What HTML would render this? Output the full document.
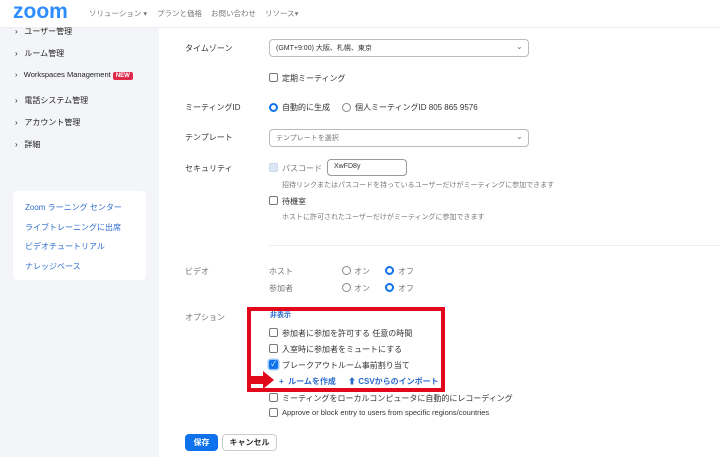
<!DOCTYPE html>
<html><head><meta charset="utf-8"><style>
*{margin:0;padding:0;box-sizing:border-box}
body{width:720px;height:457px;overflow:hidden;background:#fff;font-family:"Liberation Sans","Noto Sans CJK JP",sans-serif;color:#333;font-size:8px;position:relative}
.a{position:absolute;white-space:nowrap}
.side{position:absolute;left:0;top:28px;width:159px;height:429px;background:#f4f5f8}
.hdr{position:absolute;left:0;top:0;width:720px;height:28px;background:#fff;border-bottom:1px solid #eee}
.card{position:absolute;left:13px;top:191px;width:133px;height:89px;background:#fff;border-radius:4px}
.lnk{color:#2d6ccc;font-size:8px}
.cb{position:absolute;width:9px;height:9px;border:1px solid #777;border-radius:2px;background:#fff}
.rd{position:absolute;width:9px;height:9px;border:1px solid #888;border-radius:50%;background:#fff}
.rd.on{border:2.5px solid #0e72ed}
.sel{position:absolute;border:1px solid #bbb;border-radius:4px;background:#fff}
.g{color:#777}
.sb{color:#222}
</style></head><body>
<div class="hdr"></div>
<div class="a" style="left:13px;top:0px;font-size:21px;font-weight:bold;color:#2d8cff;line-height:24px">zoom</div>
<div class="a g" style="left:89px;top:8px;font-size:7.5px">ソリューション ▾</div>
<div class="a g" style="left:157px;top:8px;font-size:7.5px">プランと価格</div>
<div class="a g" style="left:211px;top:8px;font-size:7.5px">お問い合わせ</div>
<div class="a g" style="left:265px;top:8px;font-size:7.5px">リソース▾</div>
<div class="side"></div>
<div class="a sb" style="left:15px;top:26px;font-size:8px">›&nbsp;&nbsp; ユーザー管理</div>
<div class="a sb" style="left:15px;top:48px;font-size:8px">›&nbsp;&nbsp; ルーム管理</div>
<div class="a sb" style="left:15px;top:70px;font-size:7.5px">›&nbsp;&nbsp; Workspaces Management <span style="background:#e02a4a;color:#fff;font-weight:bold;font-size:6px;padding:1px 3px;border-radius:2px">NEW</span></div>
<div class="a sb" style="left:15px;top:95px;font-size:8px">›&nbsp;&nbsp; 電話システム管理</div>
<div class="a sb" style="left:15px;top:117px;font-size:8px">›&nbsp;&nbsp; アカウント管理</div>
<div class="a sb" style="left:15px;top:139px;font-size:8px">›&nbsp;&nbsp; 詳細</div>
<div class="card"></div>
<div class="a lnk" style="left:25px;top:202px">Zoom ラーニング センター</div>
<div class="a lnk" style="left:25px;top:222px">ライブトレーニングに出席</div>
<div class="a lnk" style="left:25px;top:241px">ビデオチュートリアル</div>
<div class="a lnk" style="left:25px;top:261px">ナレッジベース</div>

<div class="a" style="left:185px;top:43px">タイムゾーン</div>
<div class="sel" style="left:269px;top:39px;width:260px;height:18px"></div>
<div class="a" style="left:276px;top:43px;font-size:7px">(GMT+9:00) 大阪、札幌、東京</div>
<div class="a g" style="left:516px;top:42px">⌄</div>
<div class="cb" style="left:269px;top:73px"></div>
<div class="a" style="left:282px;top:73px">定期ミーティング</div>
<div class="a" style="left:185px;top:102px">ミーティングID</div>
<div class="rd on" style="left:269px;top:103px"></div>
<div class="a" style="left:282px;top:102px">自動的に生成</div>
<div class="rd" style="left:342px;top:103px"></div>
<div class="a" style="left:355px;top:102px">個人ミーティングID 805 865 9576</div>
<div class="a" style="left:185px;top:132px">テンプレート</div>
<div class="sel" style="left:269px;top:129px;width:260px;height:18px"></div>
<div class="a g" style="left:276px;top:133px;font-size:7px">テンプレートを選択</div>
<div class="a g" style="left:516px;top:132px">⌄</div>
<div class="a" style="left:185px;top:163px">セキュリティ</div>
<div class="cb" style="left:269px;top:163px;border-color:#c8d6ea;background:#dde6f3"></div>
<div class="a g" style="left:282px;top:163px">パスコード</div>
<div class="sel" style="left:327px;top:159px;width:80px;height:17px;border-color:#999"></div>
<div class="a" style="left:334px;top:163px;font-size:7px">XwFD8y</div>
<div class="a g" style="left:282px;top:180px;font-size:7px">招待リンクまたはパスコードを持っているユーザーだけがミーティングに参加できます</div>
<div class="cb" style="left:269px;top:196px"></div>
<div class="a" style="left:282px;top:196px">待機室</div>
<div class="a g" style="left:282px;top:212px;font-size:7px">ホストに許可されたユーザーだけがミーティングに参加できます</div>
<div class="a" style="left:269px;top:245px;width:451px;height:1px;background:#eee"></div>
<div class="a g" style="left:185px;top:266px">ビデオ</div>
<div class="a g" style="left:269px;top:266px">ホスト</div>
<div class="rd" style="left:342px;top:266px"></div><div class="a g" style="left:354px;top:266px">オン</div>
<div class="rd on" style="left:385px;top:266px"></div><div class="a g" style="left:398px;top:266px">オフ</div>
<div class="a g" style="left:269px;top:283px">参加者</div>
<div class="rd" style="left:342px;top:283px"></div><div class="a g" style="left:354px;top:283px">オン</div>
<div class="rd on" style="left:385px;top:283px"></div><div class="a g" style="left:398px;top:283px">オフ</div>
<div class="a g" style="left:185px;top:312px">オプション</div>
<div class="a lnk" style="left:270px;top:310px;font-weight:bold;font-size:7px">非表示</div>
<div class="cb" style="left:269px;top:328px"></div><div class="a" style="left:282px;top:328px">参加者に参加を許可する 任意の時間</div>
<div class="cb" style="left:269px;top:344px"></div><div class="a" style="left:282px;top:344px">入室時に参加者をミュートにする</div>
<div class="cb" style="left:269px;top:360px;background:#0e72ed;border-color:#0e72ed;color:#fff;font-size:7px;line-height:7px;text-align:center;box-shadow:0 0 0 1.5px #9cc3f5">✓</div>
<div class="a" style="left:282px;top:360px">ブレークアウトルーム事前割り当て</div>
<div class="a lnk" style="left:279px;top:376px;font-weight:bold">+&nbsp; ルームを作成</div>
<div class="a lnk" style="left:348px;top:376px;font-weight:bold">⬆ CSVからのインポート</div>
<div class="cb" style="left:269px;top:393px"></div><div class="a" style="left:282px;top:393px">ミーティングをローカルコンピュータに自動的にレコーディング</div>
<div class="cb" style="left:269px;top:408px"></div><div class="a" style="left:282px;top:408px;font-size:7.5px">Approve or block entry to users from specific regions/countries</div>
<div class="a" style="left:247px;top:307px;width:198px;height:85px;border:4px solid #e3071b"></div>
<svg class="a" style="left:251px;top:371px" width="24" height="18"><path d="M0 5h12V0l11 9-11 9v-5H0z" fill="#e3071b"/></svg>
<div class="a" style="left:185px;top:434px;width:33px;height:17px;background:#0e72ed;border-radius:4px;color:#fff;font-weight:bold;text-align:center;line-height:17px">保存</div>
<div class="a" style="left:222px;top:434px;width:55px;height:17px;border:1px solid #ccc;border-radius:4px;font-weight:bold;text-align:center;line-height:15px">キャンセル</div>
</body></html>
